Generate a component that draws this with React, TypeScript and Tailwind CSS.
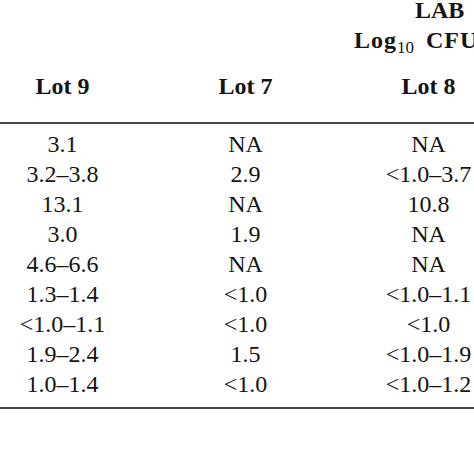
const lot9 = ['3.1', '3.2–3.8', '13.1', '3.0', '4.6–6.6', '1.3–1.4', '<1.0–1.1', '1.9–2.4', '1.0–1.4'];
const lot7 = ['NA', '2.9', 'NA', '1.9', 'NA', '<1.0', '<1.0', '1.5', '<1.0'];
const lot8 = ['NA', '<1.0–3.7', '10.8', 'NA', 'NA', '<1.0–1.1', '<1.0', '<1.0–1.9', '<1.0–1.2'];

export default function App() {
  return (
    <div className="w-[474px] h-[474px] bg-white overflow-hidden text-[#141414] font-['Liberation_Serif',serif] text-[24px] leading-[30px]">
      {/* group header, runs past the right edge */}
      <div className="pl-[354px] -mt-[5px] font-bold whitespace-nowrap">
        <div className="ml-[61px]">LAB</div>
        <div>
          <span className="tracking-[1px]">Log</span>
          <sub className="text-[17px] font-normal align-baseline relative top-[5px]">10</sub>
          <span className="ml-[12px] tracking-[1px]">CFU/g</span>
        </div>
      </div>

      <div className="w-[560px] -ml-[29px]">
        <div className="grid grid-cols-[183px_183px_183px] mt-[16px] pb-[21px] font-bold text-center">
          <div>Lot 9</div>
          <div>Lot 7</div>
          <div>Lot 8</div>
        </div>
        <div className="h-[2px] bg-[#454545]" />

        <div className="pt-[5px] pb-[8px]">
          {lot9.map((v, i) => (
            <div key={i} className="grid grid-cols-[183px_183px_183px] text-center whitespace-nowrap">
              <div>{v}</div>
              <div>{lot7[i]}</div>
              <div>{lot8[i]}</div>
            </div>
          ))}
        </div>
        <div className="h-[2px] bg-[#454545]" />
      </div>
    </div>
  );
}
